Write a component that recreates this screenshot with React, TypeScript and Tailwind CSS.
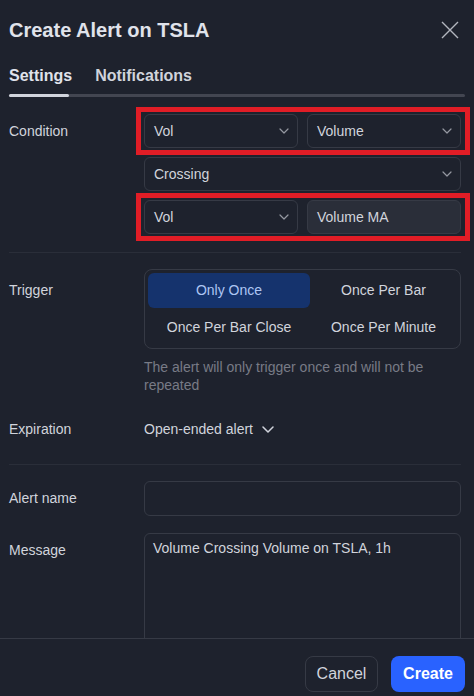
import clsx from "clsx";

function Chevron({ className }: { className?: string }) {
  return (
    <svg width="10" height="6" viewBox="0 0 10 6" fill="none" className={className}>
      <path d="M1 1l4 4 4-4" stroke="currentColor" strokeWidth="1.2" strokeLinecap="round" strokeLinejoin="round" />
    </svg>
  );
}

function SelectBox({ value, muted = false, grow = false }: { value: string; muted?: boolean; grow?: boolean }) {
  return (
    <div
      className={clsx(
        "flex h-[34px] shrink-0 items-center justify-between rounded-md border border-[#363a45] pl-[9px] pr-[8px] text-[14px] text-[#d1d4dc]",
        grow && "min-w-0 flex-1",
        muted ? "bg-[#2a2e39]" : "bg-[#1e222d]"
      )}
    >
      <span>{value}</span>
      {!muted && <Chevron className="text-[#9598a1]" />}
    </div>
  );
}

function Highlight() {
  // red annotation frame drawn over the row
  return (
    <span className="pointer-events-none absolute -top-[7px] -bottom-[7px] -left-[8px] -right-[9px] border-[5px] border-[#e11d26]" />
  );
}

function Row({ label, children, labelClass }: { label: string; children: React.ReactNode; labelClass?: string }) {
  return (
    <div className="flex">
      <div className={clsx("w-[135px] shrink-0 text-[14px] text-[#d1d4dc]", labelClass)}>{label}</div>
      <div className="min-w-0 flex-1">{children}</div>
    </div>
  );
}

const triggers = ["Only Once", "Once Per Bar", "Once Per Bar Close", "Once Per Minute"];

export default function App() {
  return (
    <div className="flex h-[696px] w-[474px] flex-col overflow-hidden bg-[#1e222d] font-['Liberation_Sans',Arial,sans-serif] text-[#d1d4dc]">
      <div className="shrink-0 pl-[9px] pr-[9px]">
        <div className="flex h-[60px] items-center justify-between">
          <h1 className="text-[20px] font-bold text-[#e0e3eb]">Create Alert on TSLA</h1>
          <svg width="18" height="18" viewBox="0 0 18 18" className="mr-[6px] text-[#b2b5be]">
            <path d="M1 1l16 16M17 1L1 17" stroke="currentColor" strokeWidth="1.4" />
          </svg>
        </div>
        <div className="mt-[4px] flex gap-[23px] text-[16px] font-bold leading-6">
          <span className="text-[#e0e3eb]">Settings</span>
          <span className="text-[#d1d4dc]">Notifications</span>
        </div>
        <div className="mt-[6px] h-[3px] rounded-full bg-[#434651]">
          <div className="h-[3px] w-[60px] rounded-full bg-[#d1d4dc]" />
        </div>
      </div>

      <div className="min-h-0 flex-1 overflow-hidden pl-[9px] pr-[13px]">
        <div className="mt-[17px]">
          <Row label="Condition" labelClass="flex h-[34px] items-center">
            <div className="flex flex-col gap-[9px]">
              <div className="relative flex gap-[9px]">
                <SelectBox value="Vol" grow />
                <SelectBox value="Volume" grow />
                <Highlight />
              </div>
              <SelectBox value="Crossing" />
              <div className="relative flex gap-[9px]">
                <SelectBox value="Vol" grow />
                <SelectBox value="Volume MA" muted grow />
                <Highlight />
              </div>
            </div>
          </Row>
        </div>

        <div className="mt-[18px] h-px bg-[#2a2e39]" />

        <div className="mt-[16px]">
          <Row label="Trigger" labelClass="flex h-[42px] items-center">
            <div className="rounded-lg border border-[#363a45] p-[3px]">
              <div className="grid grid-cols-[162px_1fr] gap-y-[2px]">
                {triggers.map((t, i) => (
                  <div
                    key={t}
                    className={clsx(
                      "flex h-[35px] items-center justify-center rounded-md text-[14px]",
                      i === 0 ? "bg-[#15336d] text-[#aec6f3]" : "text-[#d1d4dc]"
                    )}
                  >
                    {t}
                  </div>
                ))}
              </div>
            </div>
            <p className="mt-[9px] text-[14px] leading-[18px] text-[#787b86]">
              The alert will only trigger once and will not be repeated
            </p>
          </Row>
        </div>

        <div className="mt-[25px]">
          <Row label="Expiration" labelClass="leading-5">
            <div className="flex items-center gap-[9px] text-[14px] leading-5 text-[#d1d4dc]">
              <span>Open-ended alert</span>
              <svg width="12" height="7" viewBox="0 0 12 7" fill="none">
                <path d="M1 1l5 5 5-5" stroke="currentColor" strokeWidth="1.5" strokeLinecap="round" strokeLinejoin="round" />
              </svg>
            </div>
          </Row>
        </div>

        <div className="mt-[25px] h-px bg-[#2a2e39]" />

        <div className="mt-[16px]">
          <Row label="Alert name" labelClass="flex h-[35px] items-center">
            <div className="h-[35px] rounded-md border border-[#363a45] bg-[#1e222d]" />
          </Row>
        </div>

        <div className="mt-[17px]">
          <Row label="Message" labelClass="pt-[7px] leading-5">
            <div className="h-[130px] rounded-md border border-[#363a45] bg-[#1e222d] px-[8px] pt-[4px] text-[14px] leading-5 text-[#d1d4dc]">
              Volume Crossing Volume on TSLA, 1h
            </div>
          </Row>
        </div>
      </div>

      <div className="flex h-[58px] shrink-0 justify-end gap-[13px] border-t border-[#363a45] pr-[9px] pt-[17px]">
        <button className="h-[36px] w-[73px] rounded-lg border border-[#363a45] text-[16px] text-[#d1d4dc]">
          Cancel
        </button>
        <button className="h-[36px] w-[74px] rounded-lg bg-[#2962ff] text-[16px] font-bold text-white">
          Create
        </button>
      </div>
    </div>
  );
}
